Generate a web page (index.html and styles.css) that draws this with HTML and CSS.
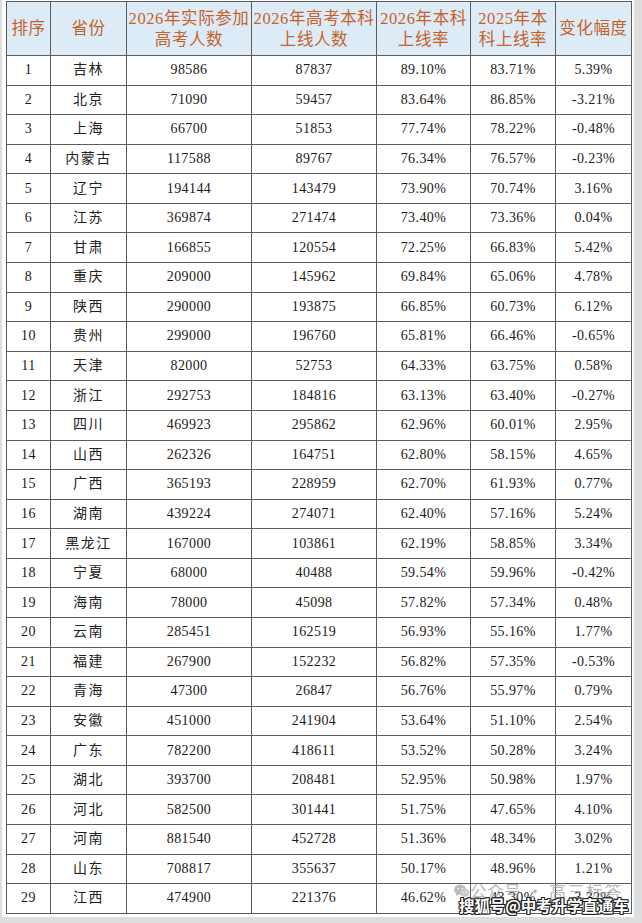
FILE: index.html
```html
<!DOCTYPE html>
<html lang="zh">
<head>
<meta charset="utf-8">
<title>2026年各省高考本科上线率</title>
<link rel="stylesheet" href="styles.css">
</head>
<body>
<div class="panel">
  <table class="grid">
    <colgroup>
      <col class="c1"><col class="c2"><col class="c3"><col class="c4"><col class="c5"><col class="c6"><col class="c7">
    </colgroup>
    <thead>
      <tr>
        <th>排序</th>
        <th>省份</th>
        <th>2026年实际参加<br>高考人数</th>
        <th>2026年高考本科<br>上线人数</th>
        <th>2026年本科<br>上线率</th>
        <th>2025年本<br>科上线率</th>
        <th>变化幅度</th>
      </tr>
    </thead>
    <tbody>
      <tr><td>1</td><td class="p">吉林</td><td>98586</td><td>87837</td><td>89.10%</td><td>83.71%</td><td>5.39%</td></tr>
      <tr><td>2</td><td class="p">北京</td><td>71090</td><td>59457</td><td>83.64%</td><td>86.85%</td><td>-3.21%</td></tr>
      <tr><td>3</td><td class="p">上海</td><td>66700</td><td>51853</td><td>77.74%</td><td>78.22%</td><td>-0.48%</td></tr>
      <tr><td>4</td><td class="p">内蒙古</td><td>117588</td><td>89767</td><td>76.34%</td><td>76.57%</td><td>-0.23%</td></tr>
      <tr><td>5</td><td class="p">辽宁</td><td>194144</td><td>143479</td><td>73.90%</td><td>70.74%</td><td>3.16%</td></tr>
      <tr><td>6</td><td class="p">江苏</td><td>369874</td><td>271474</td><td>73.40%</td><td>73.36%</td><td>0.04%</td></tr>
      <tr><td>7</td><td class="p">甘肃</td><td>166855</td><td>120554</td><td>72.25%</td><td>66.83%</td><td>5.42%</td></tr>
      <tr><td>8</td><td class="p">重庆</td><td>209000</td><td>145962</td><td>69.84%</td><td>65.06%</td><td>4.78%</td></tr>
      <tr><td>9</td><td class="p">陕西</td><td>290000</td><td>193875</td><td>66.85%</td><td>60.73%</td><td>6.12%</td></tr>
      <tr><td>10</td><td class="p">贵州</td><td>299000</td><td>196760</td><td>65.81%</td><td>66.46%</td><td>-0.65%</td></tr>
      <tr><td>11</td><td class="p">天津</td><td>82000</td><td>52753</td><td>64.33%</td><td>63.75%</td><td>0.58%</td></tr>
      <tr><td>12</td><td class="p">浙江</td><td>292753</td><td>184816</td><td>63.13%</td><td>63.40%</td><td>-0.27%</td></tr>
      <tr><td>13</td><td class="p">四川</td><td>469923</td><td>295862</td><td>62.96%</td><td>60.01%</td><td>2.95%</td></tr>
      <tr><td>14</td><td class="p">山西</td><td>262326</td><td>164751</td><td>62.80%</td><td>58.15%</td><td>4.65%</td></tr>
      <tr><td>15</td><td class="p">广西</td><td>365193</td><td>228959</td><td>62.70%</td><td>61.93%</td><td>0.77%</td></tr>
      <tr><td>16</td><td class="p">湖南</td><td>439224</td><td>274071</td><td>62.40%</td><td>57.16%</td><td>5.24%</td></tr>
      <tr><td>17</td><td class="p">黑龙江</td><td>167000</td><td>103861</td><td>62.19%</td><td>58.85%</td><td>3.34%</td></tr>
      <tr><td>18</td><td class="p">宁夏</td><td>68000</td><td>40488</td><td>59.54%</td><td>59.96%</td><td>-0.42%</td></tr>
      <tr><td>19</td><td class="p">海南</td><td>78000</td><td>45098</td><td>57.82%</td><td>57.34%</td><td>0.48%</td></tr>
      <tr><td>20</td><td class="p">云南</td><td>285451</td><td>162519</td><td>56.93%</td><td>55.16%</td><td>1.77%</td></tr>
      <tr><td>21</td><td class="p">福建</td><td>267900</td><td>152232</td><td>56.82%</td><td>57.35%</td><td>-0.53%</td></tr>
      <tr><td>22</td><td class="p">青海</td><td>47300</td><td>26847</td><td>56.76%</td><td>55.97%</td><td>0.79%</td></tr>
      <tr><td>23</td><td class="p">安徽</td><td>451000</td><td>241904</td><td>53.64%</td><td>51.10%</td><td>2.54%</td></tr>
      <tr><td>24</td><td class="p">广东</td><td>782200</td><td>418611</td><td>53.52%</td><td>50.28%</td><td>3.24%</td></tr>
      <tr><td>25</td><td class="p">湖北</td><td>393700</td><td>208481</td><td>52.95%</td><td>50.98%</td><td>1.97%</td></tr>
      <tr><td>26</td><td class="p">河北</td><td>582500</td><td>301441</td><td>51.75%</td><td>47.65%</td><td>4.10%</td></tr>
      <tr><td>27</td><td class="p">河南</td><td>881540</td><td>452728</td><td>51.36%</td><td>48.34%</td><td>3.02%</td></tr>
      <tr><td>28</td><td class="p">山东</td><td>708817</td><td>355637</td><td>50.17%</td><td>48.96%</td><td>1.21%</td></tr>
      <tr><td>29</td><td class="p">江西</td><td>474900</td><td>221376</td><td>46.62%</td><td>43.30%</td><td>3.32%</td></tr>
    </tbody>
  </table>

  <div class="wm-gray">
    <svg class="wm-icon" width="16" height="14" viewBox="0 0 17 15">
      <ellipse cx="6.5" cy="6" rx="6.5" ry="5.5" fill="#b4b4b4"/>
      <path d="M2.5 10 L2 13 L5 11 Z" fill="#b4b4b4"/>
      <ellipse cx="11.5" cy="9.5" rx="5.2" ry="4.4" fill="#c6c6c6"/>
      <circle cx="4.3" cy="4.8" r="0.9" fill="#fff"/>
      <circle cx="8.6" cy="4.8" r="0.9" fill="#fff"/>
      <circle cx="9.8" cy="8.8" r="0.7" fill="#fff"/>
      <circle cx="13.2" cy="8.8" r="0.7" fill="#fff"/>
    </svg>
    <span class="wm-g1">公众号</span><span class="wm-dot">·</span><span class="wm-g2">高三标答</span>
  </div>
  <div class="wm-white">搜狐号@中考升学直通车</div>
</div>
</body>
</html>
```

FILE: styles.css
```css
html, body {
  margin: 0;
  padding: 0;
}
body {
  background: #dedede;
  width: 642px;
  height: 923px;
  overflow: hidden;
}
.panel {
  position: relative;
  margin-left: 2px;
  width: 632px;
  height: 917px;
  background: #ffffff;
  padding: 1px 0 0 4px;
  box-sizing: border-box;
}
.grid {
  border-collapse: separate;
  border-spacing: 0;
  table-layout: fixed;
  width: 626px;
  border-top: 1px solid #5c5c5c;
  border-left: 1px solid #5c5c5c;
  font-family: "Liberation Serif", "Noto Sans CJK SC", serif;
  color: #1a1a1a;
}
.c1 { width: 44px; }
.c2 { width: 76px; }
.c3 { width: 125px; }
.c4 { width: 125px; }
.c5 { width: 94px; }
.c6 { width: 85px; }
.c7 { width: 76px; }

.grid th,
.grid td {
  box-sizing: border-box;
  border-right: 1px solid #5c5c5c;
  border-bottom: 1px solid #5c5c5c;
  padding: 0;
  text-align: center;
  vertical-align: middle;
  white-space: nowrap;
}
.grid th {
  height: 54px;
  background: #ddebf7;
  color: #c5622a;
  font-weight: normal;
  font-size: 16.5px;
  line-height: 21px;
  letter-spacing: 0.6px;
}
.grid td {
  height: 29.586px;
  font-size: 14px;
  line-height: 16px;
  letter-spacing: 0.4px;
}
.grid td.p {
  font-size: 14px;
  letter-spacing: 1.5px;
  color: #222;
}

.wm-gray {
  position: absolute;
  left: 452px;
  top: 881px;
  display: flex;
  align-items: center;
  font-family: "Noto Sans CJK SC", sans-serif;
  font-size: 17px;
  line-height: 20px;
  color: rgba(150, 150, 150, 0.7);
  white-space: nowrap;
}
.wm-icon {
  margin-right: 0;
  opacity: 0.9;
}
.wm-g1 { letter-spacing: 0; }
.wm-dot {
  display: inline-block;
  width: 28px;
  text-align: center;
}
.wm-g2 { letter-spacing: 1.5px; }

.wm-white {
  position: absolute;
  left: 457px;
  top: 896px;
  font-family: "Noto Sans CJK SC", sans-serif;
  font-weight: bold;
  font-size: 15.5px;
  line-height: 18px;
  letter-spacing: -0.1px;
  color: #ffffff;
  white-space: nowrap;
  text-shadow:
    1px 0 0 #222, -1px 0 0 #222, 0 1px 0 #222, 0 -1px 0 #222,
    1px 1px 0 #222, -1px -1px 0 #222, 1px -1px 0 #222, -1px 1px 0 #222;
}
```
